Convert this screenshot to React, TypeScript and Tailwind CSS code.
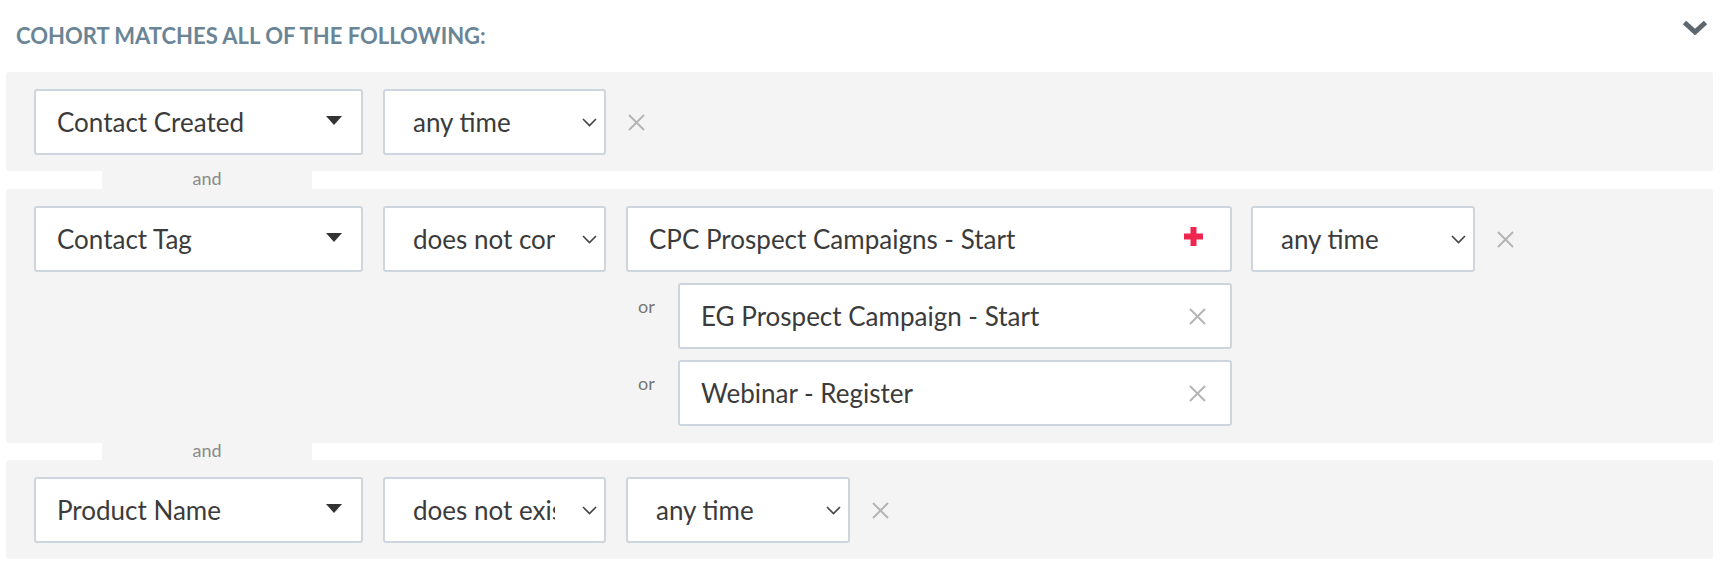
import React from 'react';

// Small drawings used across the filter rows
function Caret() {
  return (
    <svg width="16" height="9" viewBox="0 0 16 9" className="mb-[3px] shrink-0">
      <polygon points="0,0 16,0 8,9" fill="#333333" />
    </svg>
  );
}

function Chevron() {
  return (
    <svg width="15" height="9" viewBox="0 0 15 9" className="shrink-0">
      <polyline points="1,1 7.5,7.5 14,1" fill="none" stroke="#444444" strokeWidth="1.6" />
    </svg>
  );
}

function XIcon() {
  return (
    <svg width="17" height="17" viewBox="0 0 17 17" className="shrink-0">
      <line x1="1" y1="1" x2="16" y2="16" stroke="#b4b4b4" strokeWidth="2" />
      <line x1="16" y1="1" x2="1" y2="16" stroke="#b4b4b4" strokeWidth="2" />
    </svg>
  );
}

function Plus() {
  return (
    <svg width="19" height="19" viewBox="0 0 19 19" className="mb-[5px] shrink-0">
      <rect x="6.5" y="0" width="6" height="19" fill="#f0254f" />
      <rect x="0" y="6.5" width="19" height="6" fill="#f0254f" />
    </svg>
  );
}

const box = 'flex h-[66px] items-center rounded-[3px] border-2 border-[#cdd6df] bg-white text-[26px] text-[#3b3b3b]';

function FieldSelect({ label }: { label: string }) {
  return (
    <div className={`${box} w-[329px] justify-between pl-[21px] pr-[19px]`}>
      <span>{label}</span>
      <Caret />
    </div>
  );
}

function NativeSelect({ label, width, clip }: { label: string; width: string; clip?: boolean }) {
  return (
    <div className={`${box} ${width} justify-between pl-[28px] pr-[7px]`}>
      <span className={clip ? 'w-[142px] overflow-hidden whitespace-nowrap' : 'whitespace-nowrap'}>{label}</span>
      <Chevron />
    </div>
  );
}

function Remove() {
  return (
    <div className="flex h-[66px] items-center">
      <XIcon />
    </div>
  );
}

function And({ h }: { h: string }) {
  return (
    <div className={`flex ${h}`}>
      <div className="ml-[96px] flex w-[210px] items-center justify-center bg-[#f4f4f4] text-[18px] leading-none text-[#8a8a8a]">
        <span className="-mt-[4px]">and</span>
      </div>
    </div>
  );
}

function OrRow({ label }: { label: string }) {
  return (
    <div className="mt-[11px] flex">
      <div className="w-[52px] pl-[12px] pt-[14px] text-[18px] leading-none text-[#777777]">or</div>
      <div className={`${box} w-[554px] justify-between pl-[21px] pr-[24px]`}>
        <span>{label}</span>
        <XIcon />
      </div>
    </div>
  );
}

export default function App() {
  return (
    <div className="h-[569px] w-[1725px] overflow-hidden bg-white [font-family:Lato,'Open_Sans',sans-serif]">
      {/* Header */}
      <div className="flex h-[72px] items-start justify-between pl-[16px] pr-[17px]">
        <h2 className="mt-[25px] text-[22px] font-bold leading-[22px] text-[#6a8596]">
          COHORT MATCHES ALL OF THE FOLLOWING:
        </h2>
        <svg width="26" height="15" viewBox="0 0 26 15" className="mt-[20px]">
          <polyline points="2.5,2.5 13,12 23.5,2.5" fill="none" stroke="#5d676d" strokeWidth="5" />
        </svg>
      </div>

      <div className="ml-[6px] mr-[12px]">
        {/* Contact Created */}
        <div className="flex items-start gap-[20px] rounded-[3px] bg-[#f4f4f4] pb-[16px] pl-[28px] pt-[17px]">
          <FieldSelect label="Contact Created" />
          <NativeSelect label="any time" width="w-[223px]" />
          <div className="ml-[2px]">
            <Remove />
          </div>
        </div>

        <And h="h-[18px]" />

        {/* Contact Tag */}
        <div className="flex items-start gap-[20px] rounded-[3px] bg-[#f4f4f4] pb-[17px] pl-[28px] pt-[17px]">
          <FieldSelect label="Contact Tag" />
          <NativeSelect label="does not contain" width="w-[223px]" clip />
          <div className="flex w-[606px] flex-col">
            <div className={`${box} justify-between pl-[21px] pr-[27px]`}>
              <span>CPC Prospect Campaigns - Start</span>
              <Plus />
            </div>
            <OrRow label="EG Prospect Campaign - Start" />
            <OrRow label="Webinar - Register" />
          </div>
          <div className="-ml-[1px]">
            <NativeSelect label="any time" width="w-[224px]" />
          </div>
          <div className="ml-[2px]">
            <Remove />
          </div>
        </div>

        <And h="h-[17px]" />

        {/* Product Name */}
        <div className="flex items-start gap-[20px] rounded-[3px] bg-[#f4f4f4] pb-[16px] pl-[28px] pt-[17px]">
          <FieldSelect label="Product Name" />
          <NativeSelect label="does not exist" width="w-[223px]" clip />
          <NativeSelect label="any time" width="w-[224px]" />
          <div className="ml-[2px]">
            <Remove />
          </div>
        </div>
      </div>
    </div>
  );
}
